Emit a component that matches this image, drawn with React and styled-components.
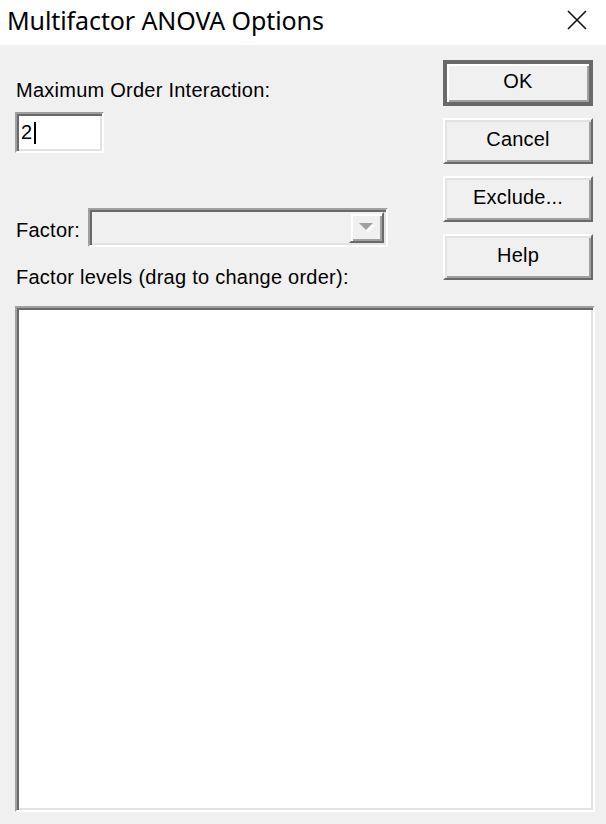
import React from 'react';
import styled, { createGlobalStyle, css } from 'styled-components';

const GlobalStyle = createGlobalStyle`
  html, body {
    margin: 0;
    padding: 0;
    background: #f0f0f0;
  }
  body {
    font-family: "Liberation Sans", Arial, sans-serif;
    color: #000;
  }
`;

const sunken = css`
  border-style: solid;
  border-width: 2px;
  border-color: #a0a0a0 #ffffff #ffffff #a0a0a0;
  box-shadow: inset 2px 2px 0 #696969, inset -2px -2px 0 #e3e3e3;
`;

const Window = styled.div`
  width: 606px;
  height: 824px;
  display: flex;
  flex-direction: column;
  background: #f0f0f0;
  overflow: hidden;
`;

const TitleBar = styled.div`
  height: 45px;
  background: #ffffff;
  display: flex;
  align-items: center;
  justify-content: space-between;
  padding: 0 18px 0 7px;
  box-sizing: border-box;
`;

const Title = styled.div`
  font-family: "Noto Sans", "Open Sans", sans-serif;
  font-size: 25px;
  margin-top: -5px;
  letter-spacing: -0.1px;
`;

const CloseButton = styled.div`
  width: 22px;
  height: 22px;
  display: flex;
  align-items: center;
  justify-content: center;
  margin-top: -6px;
`;

const Body = styled.div`
  flex: 1;
  display: flex;
  flex-direction: column;
  padding: 15px 11px 0 15px;
`;

const TopSection = styled.div`
  display: flex;
  justify-content: space-between;
`;

const LeftColumn = styled.div`
  display: flex;
  flex-direction: column;
  align-items: flex-start;
`;

const Label = styled.div`
  font-size: 20px;
  line-height: 24px;
  height: 24px;
  padding-left: 1px;
  letter-spacing: 0.25px;
  margin-top: ${(p) => p.$top || 0}px;
  white-space: nowrap;
`;

const FactorLabel = styled(Label)`
  padding-top: 4px;
`;

const EditBox = styled.div`
  ${sunken};
  width: 89px;
  height: 41px;
  box-sizing: border-box;
  margin-top: 10px;
  background: #ffffff;
  display: flex;
  align-items: center;
  padding-left: 4px;
  font-size: 20px;
`;

const Caret = styled.span`
  display: inline-block;
  width: 2px;
  height: 22px;
  background: #000;
  margin-left: 2px;
`;

const FactorRow = styled.div`
  display: flex;
  align-items: center;
  margin-top: 55px;
  gap: 8px;
`;

const Combo = styled.div`
  ${sunken};
  width: 300px;
  height: 39px;
  box-sizing: border-box;
  background: #f0f0f0;
  display: flex;
  justify-content: flex-end;
  align-items: stretch;
  padding: 2px;
`;

const ComboButton = styled.div`
  width: 31px;
  border-style: solid;
  border-width: 2px;
  border-color: #f0f0f0 #696969 #696969 #f0f0f0;
  box-shadow: inset 2px 2px 0 #ffffff, inset -2px -2px 0 #a0a0a0;
  background: #f0f0f0;
  display: flex;
  align-items: center;
  justify-content: center;
`;

const ButtonColumn = styled.div`
  display: flex;
  flex-direction: column;
  gap: 12px;
  margin-right: 2px;
`;

const Button = styled.button`
  width: 150px;
  height: 46px;
  box-sizing: border-box;
  font-family: "Liberation Sans", Arial, sans-serif;
  font-size: 20px;
  color: #000;
  background: #f0f0f0;
  padding: 0 0 3px 0;
  border-style: solid;
  border-width: 2px;
  border-color: #ffffff #696969 #696969 #ffffff;
  box-shadow: inset 2px 2px 0 #e3e3e3, inset -2px -2px 0 #a0a0a0;
  letter-spacing: 0.2px;
  ${(p) =>
    p.$default &&
    css`
      border-width: 4px;
      border-color: #696969;
      box-shadow: inset 2px 2px 0 #ffffff, inset -2px -2px 0 #a0a0a0;
    `}
`;

const ListBox = styled.div`
  ${sunken};
  margin-top: 17px;
  height: 506px;
  box-sizing: border-box;
  background: #ffffff;
`;

const CloseIcon = () => (
  <svg width="20" height="20" viewBox="0 0 20 20">
    <path d="M1 1 L19 19 M19 1 L1 19" stroke="#111" strokeWidth="1.6" fill="none" />
  </svg>
);

const DropArrow = () => (
  <svg width="18" height="10" viewBox="0 0 18 10">
    <path d="M3 2 L17 2 L10 9 Z" fill="#ffffff" />
    <path d="M1 0 L15 0 L8 7 Z" fill="#a0a0a0" />
  </svg>
);

const App = () => {
  return (
    <>
      <GlobalStyle />
      <Window>
        <TitleBar>
          <Title>Multifactor ANOVA Options</Title>
          <CloseButton>
            <CloseIcon />
          </CloseButton>
        </TitleBar>
        <Body>
          <TopSection>
            <LeftColumn>
              <Label $top={18}>Maximum Order Interaction:</Label>
              <EditBox>
                2<Caret />
              </EditBox>
              <FactorRow>
                <FactorLabel>Factor:</FactorLabel>
                <Combo>
                  <ComboButton>
                    <DropArrow />
                  </ComboButton>
                </Combo>
              </FactorRow>
              <Label $top={18}>Factor levels (drag to change order):</Label>
            </LeftColumn>
            <ButtonColumn>
              <Button $default>OK</Button>
              <Button>Cancel</Button>
              <Button>Exclude...</Button>
              <Button>Help</Button>
            </ButtonColumn>
          </TopSection>
          <ListBox />
        </Body>
      </Window>
    </>
  );
};

export default App;
